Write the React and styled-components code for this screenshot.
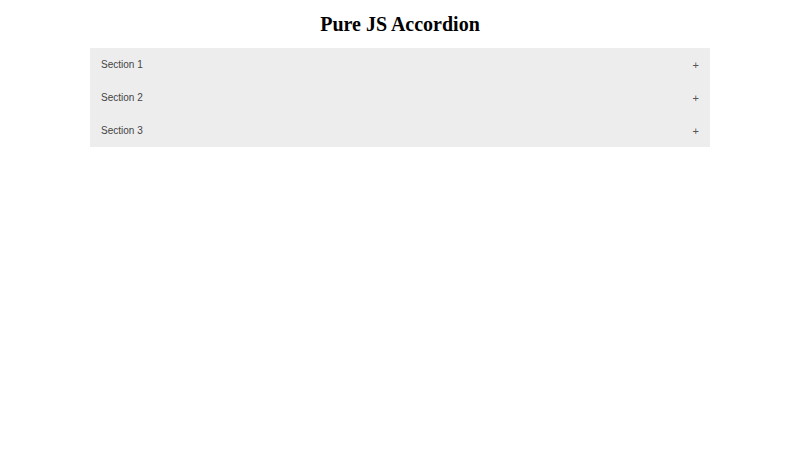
import React, { useState } from "react";
import styled, { createGlobalStyle } from "styled-components";

const GlobalStyle = createGlobalStyle`
  body {
    margin: 0;
    background: #fff;
    font-family: "Liberation Serif", "Times New Roman", serif;
  }
`;

const sections = [
  { id: 1, title: "Section 1", body: "Lorem ipsum dolor sit amet, consectetur adipisicing elit." },
  { id: 2, title: "Section 2", body: "Sed do eiusmod tempor incididunt ut labore et dolore magna aliqua." },
  { id: 3, title: "Section 3", body: "Ut enim ad minim veniam, quis nostrud exercitation ullamco." },
];

const App = () => {
  const [open, setOpen] = useState(null);

  const onToggle = (id) => {
    setOpen(open === id ? null : id);
  };

  return (
    <>
      <GlobalStyle />
      <Page>
        <Title>Pure JS Accordion</Title>
        <Accordion>
          {sections.map((item) => (
            <Item key={item.id}>
              <Header onClick={() => onToggle(item.id)}>
                <span>{item.title}</span>
                <Sign>{open === item.id ? "−" : "+"}</Sign>
              </Header>
              {open === item.id && <Panel>{item.body}</Panel>}
            </Item>
          ))}
        </Accordion>
      </Page>
    </>
  );
};

export default App;

const Page = styled.div`
  padding-top: 12px;
  display: flex;
  flex-direction: column;
  align-items: center;
`;

const Title = styled.h1`
  margin: 0 0 12px;
  font-size: 20px;
  line-height: 24px;
  font-weight: bold;
  color: #000;
`;

const Accordion = styled.div`
  width: 620px;
  background: #ededed;
`;

const Item = styled.div``;

const Header = styled.div`
  display: flex;
  justify-content: space-between;
  align-items: center;
  height: 33px;
  padding: 0 11px;
  box-sizing: border-box;
  font-family: "Liberation Sans", Arial, sans-serif;
  font-size: 10px;
  color: #444;
  cursor: pointer;
`;

const Sign = styled.span`
  font-size: 11px;
  color: #555;
`;

const Panel = styled.div`
  padding: 10px 11px;
  background: #fff;
  font-family: "Liberation Sans", Arial, sans-serif;
  font-size: 11px;
  color: #444;
`;
